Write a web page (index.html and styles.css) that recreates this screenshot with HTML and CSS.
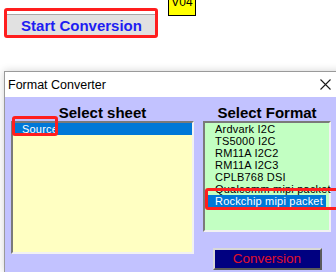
FILE: index.html
```html
<!DOCTYPE html>
<html lang="en">
<head>
    <meta charset="UTF-8">
    <meta name="viewport" content="width=device-width, initial-scale=1.0">
    <title>Format Converter</title>
    <link rel="stylesheet" href="styles.css">
</head>
<body>
    <div class="toolbar">
        <div class="start-wrap">
            <button class="start-btn" type="button">Start Conversion</button>
            <span class="mark mark-start"></span>
        </div>
        <div class="version">V04</div>
    </div>

    <div class="dialog">
        <div class="title-bar">
            <span class="title">Format Converter</span>
            <svg class="close" width="11" height="11" viewBox="0 0 11 11">
                <path d="M0.5 0.5 L10.5 10.5 M10.5 0.5 L0.5 10.5" stroke="#1a1a1a" stroke-width="1.1" fill="none"/>
            </svg>
        </div>
        <div class="dialog-body">
            <div class="column col-sheet">
                <h2>Select sheet</h2>
                <ul class="list list-sheet">
                    <li class="selected">Source</li>
                    <span class="mark mark-source"></span>
                </ul>
            </div>
            <div class="column col-format">
                <h2>Select Format</h2>
                <ul class="list list-format">
                    <li>Ardvark I2C</li>
                    <li>TS5000 I2C</li>
                    <li>RM11A I2C2</li>
                    <li>RM11A I2C3</li>
                    <li>CPLB768 DSI</li>
                    <li>Qualcomm mipi packet</li>
                    <li class="selected">Rockchip mipi packet</li>
                    <span class="mark mark-format"></span>
                </ul>
                <button class="convert-btn" type="button">Conversion</button>
            </div>
        </div>
    </div>
</body>
</html>
```

FILE: styles.css
```css
body {
    margin: 0;
    background-color: #ffffff;
    font-family: "Liberation Sans", Arial, sans-serif;
    overflow: hidden;
}
.toolbar {
    display: flex;
    align-items: flex-start;
    height: 71px;
    padding-left: 7px;
}
.start-wrap {
    position: relative;
    margin-top: 14px;
}
.start-btn {
    display: block;
    width: 149px;
    height: 22px;
    padding: 0;
    background-color: #e1e1e1;
    border: none;
    border-top: 1px solid #a8a8a8;
    color: #1e1ef2;
    font-family: "Liberation Sans", Arial, sans-serif;
    font-weight: bold;
    font-size: 15px;
    line-height: 20px;
}
.version {
    margin-left: 12px;
    margin-top: -6px;
    width: 26px;
    height: 20px;
    border: 1px solid #000000;
    background-color: #ffff00;
    font-size: 12px;
    line-height: 14px;
    text-align: center;
}
.mark {
    position: absolute;
    box-sizing: border-box;
    border: 3px solid #ff1e1e;
    border-radius: 3px;
}
.mark-start {
    left: -3px;
    top: -6px;
    width: 154px;
    height: 30px;
}
.dialog {
    margin-left: 4px;
    width: 341px;
    border: 1px solid #9a9a9a;
    border-bottom: none;
    box-shadow: 0 0 8px rgba(0, 0, 0, 0.18);
}
.title-bar {
    display: flex;
    align-items: center;
    justify-content: space-between;
    height: 25px;
    padding: 0 15px 0 3px;
    background-color: #ffffff;
}
.title {
    font-size: 12.5px;
    color: #000000;
}
.dialog-body {
    display: flex;
    gap: 9px;
    height: 167px;
    padding: 8px 0 0 6px;
    background-color: #c2c2ff;
}
.column {
    display: flex;
    flex-direction: column;
}
.col-sheet {
    width: 183px;
}
.col-format {
    width: 128px;
}
h2 {
    margin: 0;
    font-size: 15px;
    line-height: 16px;
    font-weight: bold;
    text-align: center;
    color: #000000;
}
.list {
    position: relative;
    margin: 0;
    padding: 0;
    list-style: none;
    box-sizing: border-box;
    border: 2px solid;
    border-color: #7a7a7a #f2f2f2 #f2f2f2 #7a7a7a;
    font-size: 11px;
    letter-spacing: 0.2px;
}
.list li {
    height: 12px;
    line-height: 12px;
    white-space: nowrap;
    color: #000000;
}
.list li.selected {
    background-color: #0078d7;
    color: #ffffff;
}
.list-sheet {
    height: 133px;
    background-color: #ffffc2;
}
.list-sheet li {
    padding-left: 9px;
}
.mark-source {
    left: -1px;
    top: -7px;
    width: 46px;
    height: 20px;
}
.list-format {
    height: 111px;
    background-color: #c2ffc2;
}
.list-format li {
    margin: 0 3px 0 3px;
    padding-left: 7px;
}
.mark-format {
    left: 0;
    top: 65px;
    width: 140px;
    height: 22px;
}
.convert-btn {
    align-self: center;
    margin-top: 16px;
    width: 109px;
    height: 22px;
    padding: 0;
    background-color: #000080;
    border: 2px solid;
    border-color: #d8d8d8 #5a5a5a #5a5a5a #d8d8d8;
    color: #e0102a;
    font-family: "Liberation Sans", Arial, sans-serif;
    font-size: 13.5px;
    line-height: 18px;
}
```
